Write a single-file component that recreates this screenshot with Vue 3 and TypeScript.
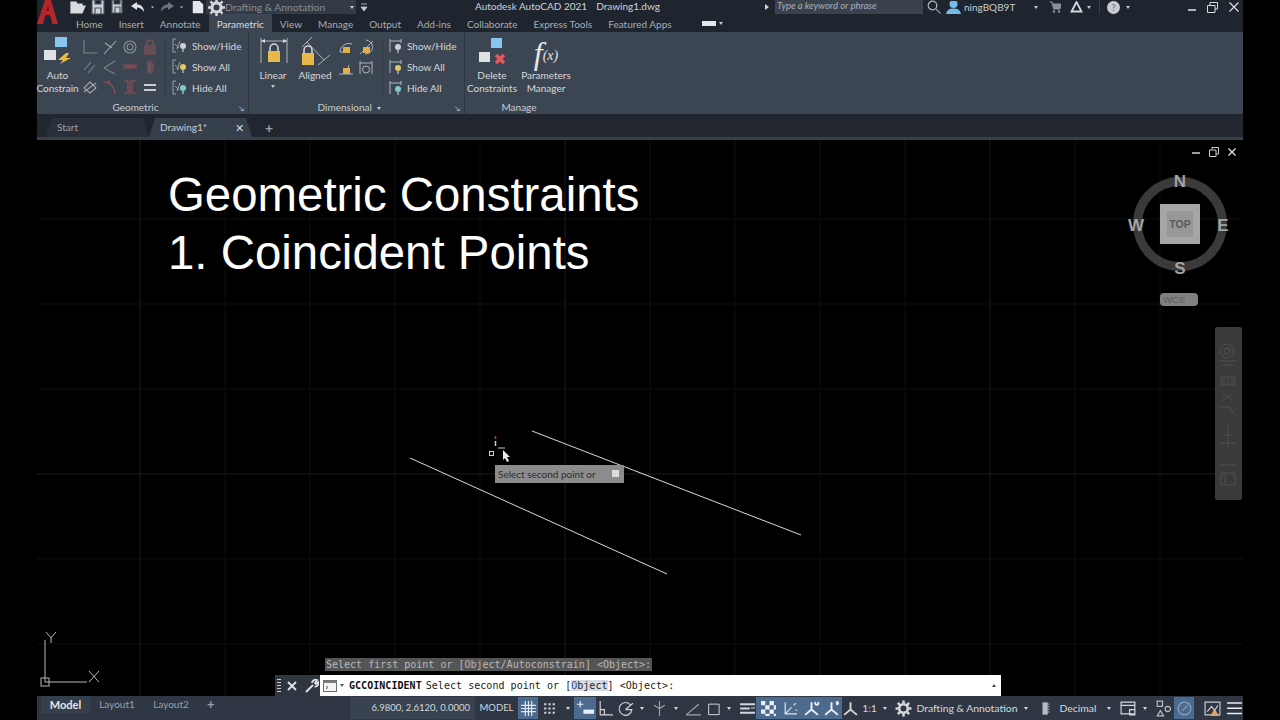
<template>
  <div class="screen">
    <div class="pillar" />
    <main class="app">
      <header class="qat-row">
        <svg class="logo" width="21" height="24" viewBox="0 0 21 24">
          <path d="M8 0H14L21 24H15.500L13 15H8.500L6 24H0Z" fill="#b3262b" />
          <path d="M9.500 11H12L11 5Z" fill="#6d1215" />
        </svg>
        <div class="qat-tools">
          <svg v-for="icon in qatIcons" :key="icon.name" class="qat-icon" :class="icon.cls" viewBox="0 0 16 16" :width="icon.w" height="16">
            <path :d="icon.d" :fill="icon.fill" :stroke="icon.stroke" stroke-width="1.200" />
          </svg>
        </div>
        <div class="workspace-box">
          <svg width="17" height="17" viewBox="0 0 16 16">
            <circle cx="8" cy="8" r="4.300" fill="none" stroke="#d4d6da" stroke-width="3" />
            <path d="M8 0V3M8 13V16M0 8H3M13 8H16M2.300 2.300L4.500 4.500M11.500 11.500L13.700 13.700M2.300 13.700L4.500 11.500M11.500 4.500L13.700 2.300" stroke="#d4d6da" stroke-width="2.200" />
          </svg>
          <span>Drafting &amp; Annotation</span>
        </div>
        <span class="mini-caret qat-caret" />
        <svg class="qat-more" width="8" height="9" viewBox="0 0 8 9"><path d="M1 1H7M1 4H7L4 8Z" fill="#c8cbd0" stroke="#c8cbd0" stroke-width="0.800" /></svg>
        <div class="app-title">Autodesk AutoCAD 2021<span>Drawing1.dwg</span></div>
        <span class="search-arrow" />
        <div class="search-box">Type a keyword or phrase</div>
        <svg class="search-icon" width="14" height="14" viewBox="0 0 14 14"><circle cx="5.500" cy="5.500" r="4.300" fill="none" stroke="#b6bbc2" stroke-width="1.200" /><path d="M9 9L13.500 13.500" stroke="#8d939b" stroke-width="1.200" /></svg>
        <svg class="user-icon" width="15" height="13" viewBox="0 0 15 13"><circle cx="7.500" cy="3" r="4" fill="#76b8ea" /><path d="M0 13C1 8.500 4 7.500 7.500 7.500S14 8.500 15 13Z" fill="#76b8ea" /></svg>
        <span class="user-name">ningBQB9T</span>
        <span class="mini-caret user-caret" />
        <svg class="cart-icon" width="11" height="12" viewBox="0 0 11 12"><path d="M0 1H2L3.500 8H10L11 3H3" fill="#8b9098" stroke="#8b9098" /><circle cx="4" cy="10.500" r="1.200" fill="#8b9098" /><circle cx="9" cy="10.500" r="1.200" fill="#8b9098" /></svg>
        <svg class="tri-icon" width="13" height="12" viewBox="0 0 13 12"><path d="M6.500 1L1.500 10.500H11.500Z" fill="none" stroke="#d5d8dc" stroke-width="1.800" /></svg>
        <span class="mini-caret tri-caret" />
        <span class="qat-sep" />
        <span class="help-icon">?</span>
        <span class="mini-caret help-caret" />
        <div class="win-buttons">
          <svg width="8" height="8" viewBox="0 0 8 8"><path d="M0 7H8" stroke="#d8dade" stroke-width="1.600" /></svg>
          <svg width="11" height="11" viewBox="0 0 11 11"><path d="M3 3V0.500H10.500V7H8M0.500 3.500H8V10.500H0.500Z" fill="none" stroke="#d8dade" /></svg>
          <svg width="10" height="10" viewBox="0 0 10 10"><path d="M0.500 0.500L9.500 9.500M9.500 0.500L0.500 9.500" stroke="#e2e4e7" stroke-width="1.100" /></svg>
        </div>
      </header>

      <nav class="tab-row">
        <span v-for="tab in ribbonTabs" :key="tab" class="ribbon-tab" :class="{ active: tab === 'Parametric' }">{{ tab }}</span>
        <span class="tab-gadget"><i /></span>
        <span class="mini-caret gadget-caret" />
      </nav>

      <section class="ribbon">
        <div class="panel panel--geo">
          <div class="panel-body">
            <div class="big-btn big-btn--auto">
              <svg width="36" height="30" viewBox="0 0 36 30">
                <rect x="15" y="1" width="12" height="10" fill="#86c6f0" />
                <rect x="4" y="14" width="12" height="10" fill="#dfe1e3" />
                <path d="M26 17L18 24H23L20 28L31 22H26L29 17Z" fill="#e9bb3f" />
              </svg>
              <span>Auto<br />Constrain</span>
            </div>
            <div class="constraint-grid">
              <svg v-for="(c, i) in constraints" :key="i" width="18" height="18" viewBox="0 0 18 18">
                <path :d="c.d" fill="none" :stroke="c.color" stroke-width="1.100" />
              </svg>
            </div>
            <span class="vsep vsep--geo" />
            <div class="show-list">
              <div v-for="row in showRows" :key="row.label + 'g'" class="show-row">
                <svg width="16" height="16" viewBox="0 0 16 16">
                  <path d="M4 1H1V14H4M3 6L7 10M8 3L5 11" fill="none" stroke="#9aa1aa" />
                  <circle cx="11" cy="8" r="3" :fill="row.bulb" /><path d="M10 11H12V14H10Z" fill="#8d949d" />
                </svg>
                <span>{{ row.label }}</span>
              </div>
            </div>
          </div>
          <div class="panel-title">Geometric<span class="launcher">↘</span></div>
        </div>

        <div class="panel panel--dim">
          <div class="panel-body">
            <div class="big-btn big-btn--linear">
              <svg width="30" height="30" viewBox="0 0 30 30">
                <path d="M3 2V27M29 2V27M3 5H29" fill="none" stroke="#aeb4bb" />
                <path d="M3 5L7 3V7ZM29 5L25 3V7Z" fill="#d5d8dc" />
                <path d="M12 15V12A4 4 0 0 1 20 12V15" fill="none" stroke="#d9dbde" stroke-width="1.500" />
                <rect x="10" y="15" width="12" height="11" fill="#e7b94a" />
              </svg>
              <span>Linear</span>
              <i class="mini-caret" />
            </div>
            <div class="big-btn big-btn--aligned">
              <svg width="36" height="30" viewBox="0 0 36 30">
                <path d="M15 1L5 11M33 19L21 29M10 6L27 24" fill="none" stroke="#aeb4bb" />
                <path d="M7 17V14A4 4 0 0 1 15 14V17" fill="none" stroke="#d9dbde" stroke-width="1.500" />
                <rect x="5" y="17" width="12" height="12" fill="#e7b94a" />
              </svg>
              <span>Aligned</span>
            </div>
            <div class="dim-grid">
              <svg v-for="(d, i) in dimIcons" :key="i" width="18" height="18" viewBox="0 0 18 18">
                <path :d="d" fill="none" stroke="#aeb4bb" />
                <rect v-if="i < 3" x="6" y="9" width="7" height="6" fill="#e0b044" />
              </svg>
            </div>
            <span class="vsep" />
            <div class="show-list show-list--dim">
              <div v-for="row in showRows" :key="row.label + 'd'" class="show-row">
                <svg width="14" height="16" viewBox="0 0 14 16">
                  <path d="M1 14V1M1 3H12M12 1V5" fill="none" stroke="#aeb4bb" />
                  <circle cx="9" cy="9" r="3" :fill="row.bulb" /><path d="M8 12H10V15H8Z" fill="#8d949d" />
                </svg>
                <span>{{ row.label }}</span>
              </div>
            </div>
          </div>
          <div class="panel-title">Dimensional <i class="mini-caret title-caret" /><span class="launcher">↘</span></div>
        </div>

        <div class="panel panel--manage">
          <div class="panel-body">
            <div class="big-btn big-btn--manage">
              <svg width="30" height="30" viewBox="0 0 30 30">
                <rect x="14" y="2" width="11" height="10" fill="#86c6f0" />
                <rect x="2" y="16" width="11" height="10" fill="#dfe1e3" />
                <path d="M19 19L27 27M27 19L19 27" stroke="#e8575c" stroke-width="3.500" />
              </svg>
              <span>Delete<br />Constraints</span>
            </div>
            <div class="big-btn big-btn--manage">
              <div class="fx"><em>f</em><small>(x)</small></div>
              <span>Parameters<br />Manager</span>
            </div>
          </div>
          <div class="panel-title panel-title--plain">Manage</div>
        </div>
      </section>

      <div class="file-tabs">
        <div class="file-tab">Start</div>
        <div class="file-tab file-tab--on">Drawing1*<span class="file-close">✕</span></div>
        <span class="file-plus">+</span>
      </div>

      <section class="canvas">
        <svg class="draw" viewBox="37 140 1206 556" width="1206" height="556">
          <path v-for="x in gridX" :key="'x' + x" :d="`M${x} 140V696`" :stroke="x === 140 || x === 565 || x === 990 ? '#1d1d1d' : '#0f0f0f'" />
          <path v-for="y in gridY" :key="'y' + y" :d="`M37 ${y}H1243`" :stroke="y === 474 ? '#1d1d1d' : '#0f0f0f'" />
          <path d="M532 431L801 535M410 458L667 574" stroke="#d8d8d8" fill="none" />
          <path d="M45 640V682H87M46 632L51 638L56 632M51 638V643M89 671L99 682M99 671L89 682" stroke="#b8b8b8" fill="none" />
          <rect x="41" y="678" width="8" height="8" fill="none" stroke="#b8b8b8" />
          <path d="M495.500 436V439" stroke="#c0384c" stroke-width="1.500" />
          <path d="M495.500 441V446" stroke="#e0c6cb" stroke-width="1.500" />
          <path d="M498 448H505" stroke="#c8c8c8" />
          <rect x="489.500" y="451.500" width="4" height="4" fill="none" stroke="#d0d0d0" />
          <path d="M503 450V460L505 458L507 462L509 461L507 457L510 457Z" fill="#e8e8e8" />
          <circle cx="1180" cy="224" r="42.500" fill="none" stroke="#3a3a3a" stroke-width="9" />
          <rect x="1160" y="204" width="40" height="40" fill="#a6a6a6" />
          <rect x="1167" y="211" width="26" height="26" fill="#989898" />
          <text x="1180" y="228" class="cube-top">TOP</text>
          <text x="1180" y="187" class="compass">N</text>
          <text x="1180" y="274" class="compass">S</text>
          <text x="1223" y="231" class="compass">E</text>
          <text x="1136" y="231" class="compass">W</text>
          <rect x="1160" y="293" width="38" height="13" rx="4" fill="#808080" />
          <text x="1163" y="303" class="wcs">WCS</text>
        </svg>

        <h1 class="slide-title">Geometric Constraints<br />1. Coincident Points</h1>

        <div class="view-buttons">
          <svg width="8" height="8" viewBox="0 0 8 8"><path d="M0 5H8" stroke="#d0d0d0" stroke-width="1.500" /></svg>
          <svg width="10" height="10" viewBox="0 0 10 10"><path d="M3 2.500V0.500H9.500V7H7M0.500 3H7V9.500H0.500Z" fill="none" stroke="#d0d0d0" /></svg>
          <svg width="8" height="8" viewBox="0 0 8 8"><path d="M0.500 0.500L7.500 7.500M7.500 0.500L0.500 7.500" stroke="#e0e0e0" stroke-width="1.400" /></svg>
        </div>

        <div class="nav-bar">
          <svg width="26" height="173" viewBox="0 0 26 173">
            <circle cx="12" cy="24" r="7" fill="none" stroke="#515151" /><circle cx="12" cy="24" r="3" fill="none" stroke="#515151" />
            <path d="M5 34H21M8 38H18M6 50H20V58H6ZM9 50V58M13 50V58M17 50V58M7 66L18 74M18 66L7 74M5 80H14L20 88M13 98V122M5 116H21M8 108H18M5 138H20M6 146H20V158H6ZM10 146V158" fill="none" stroke="#515151" />
          </svg>
        </div>

        <div class="tip">Select second point or<span class="tip-key" /></div>

        <div class="history">Select first point or [Object/Autoconstrain] &lt;Object&gt;:</div>
        <div class="cmd-line">
          <div class="cmd-handle">
            <span class="grip" />
            <svg width="10" height="10" viewBox="0 0 10 10"><path d="M1 1L9 9M9 1L1 9" stroke="#e0e2e5" stroke-width="1.800" /></svg>
            <svg class="wrench" width="14" height="14" viewBox="0 0 14 14"><path d="M1 13L8 6M7 4A3.500 3.500 0 0 1 12 1L10 4L11 5L13.500 3A3.500 3.500 0 0 1 9.500 7.500" fill="none" stroke="#e0e2e5" stroke-width="1.800" /></svg>
          </div>
          <div class="cmd-input">
            <svg width="14" height="12" viewBox="0 0 14 12"><rect x="0.500" y="0.500" width="13" height="11" fill="#f4f4f4" stroke="#6c6c6c" /><rect x="0.500" y="0.500" width="13" height="2.500" fill="#7c7c7c" /><path d="M3 6L5 7.500L3 9" fill="none" stroke="#444" stroke-width="0.800" /></svg>
            <i class="mini-caret cmd-caret" />
            <b>GCCOINCIDENT</b>
            <span>Select second point or [<mark><u>O</u>bject</mark>] &lt;Object&gt;:</span>
            <i class="mini-caret cmd-up" />
          </div>
        </div>
      </section>

      <footer class="status">
        <div class="layout-tabs">
          <span class="layout-tab on">Model</span>
          <span class="layout-tab">Layout1</span>
          <span class="layout-tab">Layout2</span>
          <span class="layout-plus">+</span>
        </div>
        <div class="status-tools">
          <span class="coords">6.9800, 2.6120, 0.0000</span>
          <span class="model-label">MODEL</span>
          <template v-for="item in statusItems" :key="item.id">
            <span v-if="item.caret" class="status-caret" :style="{ width: item.w + 'px' }"><i class="mini-caret" /></span>
            <span v-else-if="item.sep" class="status-sep" :style="{ width: item.w + 'px' }" />
            <span v-else-if="item.text" class="status-text" :style="{ width: item.w + 'px' }">{{ item.text }}</span>
            <span v-else class="status-icon" :class="{ on: item.on }" :style="{ width: item.w + 'px' }">
              <svg width="17" height="17" viewBox="0 0 16 16">
                <path :d="item.d" fill="none" :stroke="item.color || '#d3d7dc'" :stroke-width="item.sw || 1.100" />
                <path v-if="item.fill" :d="item.fill" :fill="item.fillColor || '#d3d7dc'" />
              </svg>
            </span>
          </template>
        </div>
      </footer>
    </main>
    <div class="pillar" />
  </div>
</template>

<script setup lang="ts">
interface StatusItem {
  id: string
  w: number
  d?: string
  fill?: string
  fillColor?: string
  color?: string
  sw?: number
  on?: boolean
  caret?: boolean
  sep?: boolean
  text?: string
}

const ribbonTabs = ['Home', 'Insert', 'Annotate', 'Parametric', 'View', 'Manage', 'Output', 'Add-ins', 'Collaborate', 'Express Tools', 'Featured Apps']

const qatIcons = [
  { name: 'open', w: 16, d: 'M1 14V3H6L7 5H12V7H4L1 14H12L15 7H4', fill: '#d9dbde', stroke: '#d9dbde', cls: '' },
  { name: 'save', w: 16, d: 'M2 1H14V15H2ZM5 1V5H11V1M5 9H11V15H5Z', fill: '#cfd2d6', stroke: '#4a525d', cls: '' },
  { name: 'saveas', w: 16, d: 'M2 1H12V14H2ZM4 1V5H10V1M5 8H10V14H5Z', fill: '#cfd2d6', stroke: '#4a525d', cls: '' },
  { name: 'undo', w: 16, d: 'M7 3L1 7L7 11V8.500C10 8.500 12 10 14 13C14 8 11 5.500 7 5.500Z', fill: '#e2e4e7', stroke: 'none', cls: '' },
  { name: 'undoc', w: 5, d: 'M3 6H13L8 12Z', fill: '#c8cbd0', stroke: 'none', cls: 'tiny' },
  { name: 'redo', w: 16, d: 'M9 3L15 7L9 11V8.500C6 8.500 4 10 2 13C2 8 5 5.500 9 5.500Z', fill: '#6d747d', stroke: 'none', cls: '' },
  { name: 'redoc', w: 5, d: 'M3 6H13L8 12Z', fill: '#c8cbd0', stroke: 'none', cls: 'tiny' },
  { name: 'plot', w: 14, d: 'M2 1H10L14 5V15H2Z', fill: '#e6e7e9', stroke: 'none', cls: 'plot' }
]

const GREY = '#7b838d'
const RED = '#8d5258'
const constraints = [
  { d: 'M3 2V15H16', color: GREY },
  { d: 'M3 16L15 3M4 5L11 10', color: '#a2a8af' },
  { d: 'M9 3A6 6 0 1 0 9 15A6 6 0 1 0 9 3M9 6A3 3 0 1 0 9 12A3 3 0 1 0 9 6', color: '#8b9199' },
  { d: 'M4 8H14V16H4ZM6 8V5A3 3 0 0 1 12 5V8M5 10H13M5 12H13M5 14H13', color: RED },
  { d: 'M3 12L10 4M7 15L14 7', color: GREY },
  { d: 'M3 10L14 3M3 10L14 16', color: GREY },
  { d: 'M2 7H16M2 10H16M4 8.500H14', color: RED },
  { d: 'M7 2V16M10 2V16M8.500 4V14M12 5V13', color: RED },
  { d: 'M9 4L15 10L9 15L3 10ZM3 14L15 5', color: '#a2a8af' },
  { d: 'M3 4C9 4 13 8 14 16M7 2L10 7', color: RED },
  { d: 'M3 3H7V15H3M15 3H11V15H15M9 1V17', color: RED },
  { d: 'M3 6.500H15M3 7.500H15M3 11.500H15M3 12.500H15', color: '#c8ccd1' }
]

const showRows = [
  { label: 'Show/Hide', bulb: '#cdd2d6' },
  { label: 'Show All', bulb: '#e6c765' },
  { label: 'Hide All', bulb: '#7fc9cf' }
]

const dimIcons = [
  'M3 14A9 9 0 0 1 15 6M3 14H6',
  'M9 2A7 7 0 1 1 8 16M3 16L16 3',
  'M2 15H16M9 15L12 6',
  'M3 2V15M15 2V15M3 4H15M9 7A3.500 3.500 0 1 0 9 14A3.500 3.500 0 1 0 9 7'
]

const gridX = [140, 225, 310, 395, 480, 565, 650, 735, 820, 905, 990, 1075, 1160]
const gridY = [219, 304, 389, 474, 559, 644]

const statusItems: StatusItem[] = [
  { id: 'grid', w: 20, on: true, d: 'M5 1V15M8 1V15M11 1V15M1 5H15M8 8H15M1 8H15M1 11H15', color: '#dfe6ee' },
  { id: 'snap', w: 23, d: '', fill: 'M3 3h2v2H3zM7 3h2v2H7zM11 3h2v2h-2zM3 7h2v2H3zM7 7h2v2H7zM11 7h2v2h-2zM3 11h2v2H3zM7 11h2v2H7zM11 11h2v2h-2z' },
  { id: 'c1', w: 13, caret: true },
  { id: 'infer', w: 22, on: true, d: 'M3 1V7M0 4H6', fill: 'M6 9H16V13H6Z', fillColor: '#e6edf4', color: '#e6edf4' },
  { id: 'ortho', w: 18, d: 'M3 1V14H15M3 9H7V14' },
  { id: 'polar', w: 22, d: 'M13 5A6 6 0 1 0 14 9H8M8 9L15 3' },
  { id: 'c2', w: 11, caret: true },
  { id: 'iso', w: 24, d: 'M8 1V15M3 5L8 8L13 5', color: '#9ea4ac' },
  { id: 'c3', w: 9, caret: true },
  { id: 'osnap', w: 26, d: 'M1 14H15M1 14L13 4', color: '#9ea4ac' },
  { id: 'square', w: 14, d: 'M3 3H15V15H3Z' },
  { id: 'c4', w: 18, caret: true },
  { id: 'lwt', w: 18, d: '', fill: 'M1 3H15V5H1ZM1 7H10V9H1ZM1 11H15V13H1ZM11 7H15V8H11Z' },
  { id: 'transp', w: 24, on: true, d: '', fill: 'M1 1h4v4H1zM9 1h4v4H9zM5 5h4v4H5zM13 5h2v4h-2zM1 9h4v4H1zM9 9h4v4H9zM5 13h4v2H5zM13 13h2v2h-2z', fillColor: '#eef2f6' },
  { id: 'sel', w: 21, on: true, d: 'M3 2V13H14M3 13L9 7M11 5L13 3M13 9L14 10', color: '#dbe6f2' },
  { id: 'ann1', w: 20, on: true, d: 'M8 9V2M8 9L2 14M8 9L14 14M12 2A1.500 1.500 0 1 0 14 2', color: '#eef2f6', sw: 1.800 },
  { id: 'ann2', w: 21, on: true, d: 'M8 9V2M8 9L2 14M8 9L14 14M12 3H15M13.500 1V5', color: '#eef2f6', sw: 1.800 },
  { id: 'ann3', w: 17, d: 'M8 9V2M8 9L2 14M8 9L14 14', sw: 1.800 },
  { id: 'scale', w: 21, text: '1:1' },
  { id: 'c5', w: 9, caret: true },
  { id: 's1', w: 4, sep: true },
  { id: 'gear', w: 20, d: 'M8 4A4 4 0 1 0 8 12A4 4 0 1 0 8 4M8 0.500V3M8 13V15.500M0.500 8H3M13 8H15.500M2.700 2.700L4.500 4.500M11.500 11.500L13.300 13.300M2.700 13.300L4.500 11.500M11.500 4.500L13.300 2.700', color: '#d3d7dc', sw: 2.400 },
  { id: 'ws', w: 108, text: 'Drafting & Annotation' },
  { id: 'c6', w: 10, caret: true },
  { id: 's2', w: 8, sep: true },
  { id: 'units', w: 14, d: 'M10 3H12M10 6H12M10 9H12M10 12H12', fill: 'M4 1H10V15H4Z', fillColor: '#b7bcc3', color: '#b7bcc3' },
  { id: 'gap', w: 2, sep: true },
  { id: 'dec', w: 46, text: 'Decimal' },
  { id: 'c7', w: 16, caret: true },
  { id: 'cust', w: 22, d: 'M1 2H14V13H1ZM1 5H14M9 9H14V14H9Z' },
  { id: 'c8', w: 11, caret: true },
  { id: 'iso2', w: 24, d: 'M3 1H8V6H3ZM13 6A2.500 2.500 0 1 0 13 11A2.500 2.500 0 1 0 13 6M6 10L9 15H3Z', color: '#b9bec5' },
  { id: 'hw', w: 20, on: true, d: 'M8 2A6 6 0 1 0 8 14A6 6 0 1 0 8 2M6 10L11 5', color: '#8aa4bf' },
  { id: 's3', w: 5, sep: true },
  { id: 'clean', w: 26, d: 'M1 2H15V14H1ZM3 11L7 6L10 10L13 5', fill: 'M10 8L14 15H6Z', fillColor: '#e2a36a', color: '#c8ccd1' },
  { id: 'menu', w: 18, d: '', fill: 'M1 2H15V3.500H1ZM1 7H15V8.500H1ZM1 12H15V13.500H1Z', fillColor: '#eceef0' }
]
</script>

<style>
html,
body {
  margin: 0;
  background: #000;
}
</style>

<style scoped>
.screen {
  display: flex;
  width: 1280px;
  height: 720px;
  overflow: hidden;
  background: #000;
  font-family: Lato, "Open Sans", "Liberation Sans", sans-serif;
  font-size: 10px;
  color: #d5d8dc;
}

.pillar {
  flex: 0 0 37px;
}

.app {
  display: flex;
  flex: 0 0 1206px;
  flex-direction: column;
  min-width: 0;
}

.mini-caret {
  display: inline-block;
  width: 0;
  height: 0;
  border-top: 3px solid #c8cbd0;
  border-right: 2.500px solid transparent;
  border-left: 2.500px solid transparent;
}

/* top rows */
.qat-row {
  position: relative;
  z-index: 2;
  display: flex;
  align-items: center;
  height: 14px;
  padding-right: 4px;
  background: #1f252e;
}

.logo {
  position: absolute;
  top: 0;
  left: 0;
}

.qat-tools {
  display: flex;
  align-items: center;
  gap: 4px;
  margin-left: 33px;
}

.plot {
  margin-left: 3px;
}

.workspace-box {
  display: flex;
  align-items: center;
  width: 150px;
  height: 14px;
  margin-left: 1px;
  padding-left: 2px;
  box-sizing: border-box;
  background: #343b46;
  font-size: 10.300px;
  color: #868c95;
}

.qat-caret {
  margin-left: -6px;
  position: relative;
}

.qat-more {
  margin-left: 6px;
}

.app-title {
  margin-left: 107px;
  padding-bottom: 2px;
  font-size: 10px;
  white-space: nowrap;
  color: #cfd2d6;
}

.app-title span {
  margin-left: 9px;
}

.search-arrow {
  width: 0;
  height: 0;
  margin-left: auto;
  border-top: 3px solid transparent;
  border-bottom: 3px solid transparent;
  border-left: 4px solid #cfd2d6;
}

.search-box {
  width: 148px;
  height: 14px;
  margin-left: 6px;
  padding-left: 2px;
  box-sizing: border-box;
  background: #3a424e;
  font-size: 9.500px;
  font-style: italic;
  line-height: 12px;
  color: #aab0b8;
}

.search-icon {
  margin-left: 4px;
}

.user-icon {
  margin-left: 5px;
}

.user-name {
  width: 54px;
  margin-left: 3px;
  color: #c8ccd1;
}

.user-caret {
  margin-left: 16px;
}

.cart-icon {
  margin-left: 12px;
}

.tri-icon {
  margin-left: 9px;
}

.tri-caret {
  margin-left: 4px;
}

.qat-sep {
  width: 1px;
  height: 12px;
  margin-left: 8px;
  background: #3c434e;
}

.help-icon {
  width: 13px;
  height: 13px;
  margin-left: 7px;
  border-radius: 50%;
  background: #c9cbcf;
  font-size: 9px;
  font-weight: 700;
  line-height: 13px;
  text-align: center;
  color: #7b7f86;
}

.help-caret {
  margin-left: 6px;
}

.win-buttons {
  display: flex;
  align-items: center;
  gap: 11px;
  margin-left: 58px;
}

.tab-row {
  display: flex;
  align-items: stretch;
  height: 18px;
  padding-left: 31px;
  background: #1f252e;
}

.ribbon-tab {
  padding: 2px 8px 0;
  line-height: 17px;
  white-space: nowrap;
  color: #a7adb5;
}

.ribbon-tab.active {
  background: #3c4653;
  color: #d8dbdf;
}

.tab-gadget {
  display: flex;
  align-items: center;
  margin-left: 22px;
}

.tab-gadget i {
  display: block;
  width: 14px;
  height: 5px;
  background: #e3e5e8;
}

.gadget-caret {
  align-self: center;
  margin-left: 3px;
}

/* ribbon */
.ribbon {
  display: flex;
  height: 82px;
  background: #3c4653;
}

.panel {
  display: flex;
  flex-direction: column;
  box-sizing: border-box;
  border-right: 1px solid #2f3742;
}

.panel--geo {
  width: 212px;
}

.panel--dim {
  width: 216px;
}

.panel--manage {
  width: 108px;
  border-right: 0;
}

.panel-body {
  display: flex;
  height: 68px;
  padding-top: 4px;
  box-sizing: border-box;
}

.panel-title {
  position: relative;
  height: 14px;
  padding-right: 14px;
  line-height: 14px;
  text-align: center;
  color: #c8ccd1;
}

.panel-title--plain {
  padding-right: 0;
}

.title-caret {
  margin-left: 3px;
  vertical-align: middle;
}

.launcher {
  position: absolute;
  top: 1px;
  right: 4px;
  font-size: 7px;
  color: #c8ccd1;
}

.big-btn {
  display: flex;
  flex: none;
  flex-direction: column;
  align-items: center;
  line-height: 13px;
  text-align: center;
  white-space: nowrap;
  color: #d5d8dc;
}

.big-btn svg {
  display: block;
  height: 30px;
  margin-bottom: 3px;
}

.big-btn--auto {
  width: 41px;
}

.big-btn--linear {
  width: 34px;
  margin-left: 7px;
}

.big-btn--linear .mini-caret {
  margin-top: 3px;
}

.big-btn--aligned {
  width: 40px;
  margin-left: 5px;
}

.big-btn--manage {
  width: 54px;
}

.constraint-grid {
  display: grid;
  grid-template-columns: repeat(4, 20px);
  grid-auto-rows: 20px;
  place-items: center;
  width: 80px;
  margin-left: 2px;
  padding-top: 1px;
}

.vsep {
  flex: none;
  width: 1px;
  height: 60px;
  margin: 2px 6px 0;
  background: #313944;
}

.vsep--geo {
  margin: 2px 6px 0 5px;
}

.show-list {
  display: flex;
  flex-direction: column;
  margin-top: -1px;
}

.show-row {
  display: flex;
  align-items: center;
  gap: 4px;
  height: 21px;
  white-space: nowrap;
  color: #d5d8dc;
}

.dim-grid {
  display: grid;
  grid-template-columns: repeat(2, 20px);
  grid-auto-rows: 21px;
  place-items: center;
  margin-left: 1px;
}

.fx {
  display: flex;
  align-items: flex-end;
  height: 33px;
  font-family: "Liberation Serif", serif;
  color: #e4e6e9;
}

.fx em {
  font-size: 32px;
  line-height: 32px;
}

.fx small {
  margin-bottom: 6px;
  font-size: 14px;
  font-style: italic;
  line-height: 14px;
}

/* document tabs */
.file-tabs {
  display: flex;
  align-items: flex-end;
  height: 23px;
  padding-left: 9px;
  border-bottom: 3px solid #3a4049;
  background: #22272f;
}

.file-tab {
  position: relative;
  width: 103px;
  height: 19px;
  padding-left: 11px;
  box-sizing: border-box;
  background: #2a303a;
  clip-path: polygon(6px 0, calc(100% - 6px) 0, 100% 100%, 0 100%);
  line-height: 19px;
  color: #9aa0a8;
}

.file-tab--on {
  background: #36404c;
  color: #c8ccd1;
}

.file-close {
  position: absolute;
  top: 0;
  right: 8px;
  font-size: 11px;
  color: #d5d8dc;
}

.file-plus {
  margin-left: 13px;
  font-size: 14px;
  font-weight: 700;
  line-height: 19px;
  color: #9aa0a8;
}

/* drawing area */
.canvas {
  position: relative;
  flex: 1;
  min-height: 0;
  overflow: hidden;
  background: #000;
}

.draw {
  position: absolute;
  top: 0;
  left: 0;
  display: block;
}

.cube-top {
  font-family: "Liberation Sans", sans-serif;
  font-size: 10.500px;
  font-weight: 700;
  text-anchor: middle;
  fill: #57595c;
}

.compass {
  font-family: "Liberation Sans", sans-serif;
  font-size: 17px;
  font-weight: 700;
  text-anchor: middle;
  fill: #a3a3a3;
}

.wcs {
  font-family: "Liberation Sans", sans-serif;
  font-size: 9.500px;
  fill: #5d5d5d;
}

.slide-title {
  position: absolute;
  top: 26px;
  left: 131px;
  margin: 0;
  font-family: "Liberation Sans", sans-serif;
  font-size: 47.400px;
  font-weight: 400;
  line-height: 58px;
  white-space: nowrap;
  color: #fff;
}

.view-buttons {
  position: absolute;
  top: 7px;
  right: 7px;
  display: flex;
  align-items: center;
  gap: 9px;
}

.nav-bar {
  position: absolute;
  top: 187px;
  left: 1178px;
  width: 27px;
  height: 173px;
  border-radius: 2px;
  background: #3a3a3a;
}

.nav-bar svg {
  display: block;
}

.tip {
  position: absolute;
  top: 325px;
  left: 458px;
  display: flex;
  align-items: center;
  justify-content: space-between;
  width: 129px;
  height: 18px;
  padding: 0 3px 1px;
  box-sizing: border-box;
  background: #8c8c8c;
  color: #2e2e2e;
}

.tip-key {
  width: 7px;
  height: 7px;
  margin-right: 2px;
  background: #dcdcdc;
}

.history {
  position: absolute;
  top: 518px;
  left: 288px;
  height: 13px;
  padding: 0 1px;
  background: #555;
  font-family: "DejaVu Sans Mono", "Liberation Mono", monospace;
  font-size: 10px;
  line-height: 13px;
  white-space: nowrap;
  color: #b8b8b8;
}

.cmd-line {
  position: absolute;
  top: 535px;
  left: 238px;
  display: flex;
  width: 726px;
  height: 21px;
}

.cmd-handle {
  display: flex;
  flex: 0 0 45px;
  align-items: center;
  padding-left: 2px;
  box-sizing: border-box;
  background: #2f3640;
}

.grip {
  width: 4px;
  height: 14px;
  background: repeating-linear-gradient(#c8ccd1 0 1px, transparent 1px 3px);
}

.cmd-handle svg {
  margin-left: 6px;
}

.cmd-handle .wrench {
  margin-left: 8px;
}

.cmd-input {
  position: relative;
  display: flex;
  flex: 1;
  align-items: center;
  padding-left: 3px;
  background: #fff;
  font-family: "DejaVu Sans Mono", "Liberation Mono", monospace;
  font-size: 10px;
  letter-spacing: 0.040px;
  white-space: nowrap;
  color: #222;
}

.cmd-caret {
  margin-left: 3px;
  border-top-color: #555;
}

.cmd-input b {
  margin-left: 5px;
  color: #111;
}

.cmd-input span {
  margin-left: 4px;
}

.cmd-input mark {
  background: #d9dbe2;
  color: #222;
}

.cmd-input u {
  text-decoration: none;
  color: #2a4fa8;
}

.cmd-up {
  position: absolute;
  top: 9px;
  right: 5px;
  border-top: 0;
  border-bottom: 3px solid #444;
}

/* status bar */
.status {
  display: flex;
  justify-content: space-between;
  height: 24px;
  background: #2f3744;
}

.layout-tabs {
  display: flex;
  align-items: flex-start;
  padding-left: 4px;
}

.layout-tab {
  width: 54px;
  height: 17px;
  line-height: 17px;
  text-align: center;
  color: #9aa0a8;
}

.layout-tab.on {
  width: 49px;
  background: #36404c;
  font-size: 11px;
  font-weight: 700;
  color: #e4e6e9;
}

.layout-plus {
  margin-left: 9px;
  font-size: 13px;
  font-weight: 700;
  line-height: 16px;
  color: #9aa0a8;
}

.status-tools {
  display: flex;
  align-items: stretch;
  width: 893px;
  height: 22px;
  margin-top: 1px;
}

.coords {
  width: 125px;
  padding-right: 5px;
  box-sizing: border-box;
  background: #39424f;
  font-size: 9.500px;
  line-height: 22px;
  text-align: right;
  color: #d5d8dc;
}

.model-label {
  width: 43px;
  font-size: 9.500px;
  line-height: 22px;
  text-align: center;
  color: #d5d8dc;
}

.status-icon,
.status-caret,
.status-text,
.status-sep {
  display: flex;
  flex: none;
  align-items: center;
  justify-content: center;
  white-space: nowrap;
  color: #d5d8dc;
}

.status-text {
  font-size: 10.400px;
}

.status-icon.on {
  background: #4b6a8e;
}

.status-caret .mini-caret {
  border-top-color: #d5d8dc;
}
</style>
